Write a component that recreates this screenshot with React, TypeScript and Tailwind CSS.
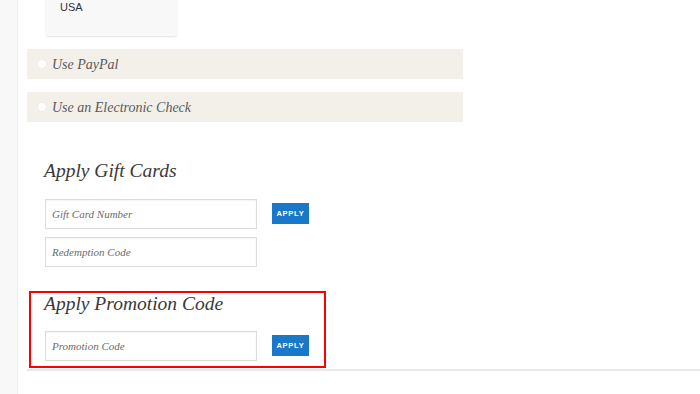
import React from 'react';

const serif = "font-['Georgia','Liberation_Serif','DejaVu_Serif',serif] italic";

function ApplyButton() {
  return (
    <button className="mt-[4px] h-[21px] w-[37px] bg-[#1a78c8] text-white text-[7.5px] font-bold tracking-[0.1em] font-['Liberation_Sans',Arial,sans-serif]">
      APPLY
    </button>
  );
}

function Field({ placeholder }: { placeholder: string }) {
  return (
    <div className={`h-[30px] w-[212px] border border-[#dcdcdc] shadow-[inset_0_1px_2px_rgba(0,0,0,0.05)] flex items-center pl-[6px] text-[11px] text-[#6b6b6b] ${serif}`}>
      {placeholder}
    </div>
  );
}

function PayOption({ label }: { label: string }) {
  return (
    <div className="h-[30px] w-[436px] bg-[#f3f0ea] flex items-center pl-[10px] gap-[5px]">
      <span className="h-[10px] w-[10px] rounded-full bg-white border border-[#ecebe8]" />
      <span className={`text-[14px] text-[#5a5a5a] ${serif}`}>{label}</span>
    </div>
  );
}

export default function App() {
  return (
    <div className="flex h-[394px] w-[700px] overflow-hidden bg-white">
      {/* Left gutter */}
      <div className="w-[18px] shrink-0 bg-[#f8f8f8] border-r border-[#ececec]" />

      {/* Main column */}
      <div className="flex-1 pl-[9px]">
        <div className="ml-[19px] h-[36px] w-[131px] rounded-b-[3px] bg-[#f8f8f8] shadow-[0_1px_2px_rgba(0,0,0,0.12)] pl-[14px] text-[11px] leading-[14px] text-[#333] font-['Liberation_Sans',Arial,sans-serif]">
          USA
        </div>

        <div className="mt-[13px] flex flex-col gap-[13px]">
          <PayOption label="Use PayPal" />
          <PayOption label="Use an Electronic Check" />
        </div>

        {/* Gift cards */}
        <div className="pl-[17px] mt-[37px]">
          <h2 className={`text-[19.5px] leading-[24px] text-[#3a3a3a] font-normal ${serif}`}>Apply Gift Cards</h2>
          <div className="mt-[16px] flex items-start gap-[15px] pl-[1px]">
            <div className="flex flex-col gap-[8px]">
              <Field placeholder="Gift Card Number" />
              <Field placeholder="Redemption Code" />
            </div>
            <ApplyButton />
          </div>
        </div>

        {/* Promotion code */}
        <div className="mt-[24px] ml-[2px] h-[77px] w-[297px] border-2 border-[#ff0000] pl-[13px]">
          <h2 className={`text-[19.5px] leading-[22px] text-[#3a3a3a] font-normal ${serif}`}>Apply Promotion Code</h2>
          <div className="mt-[16px] flex items-start gap-[15px] pl-[1px]">
            <Field placeholder="Promotion Code" />
            <ApplyButton />
          </div>
        </div>

        <div className="mt-[1px] h-[2px] w-full bg-[#e8e8e8]" />
      </div>
    </div>
  );
}
